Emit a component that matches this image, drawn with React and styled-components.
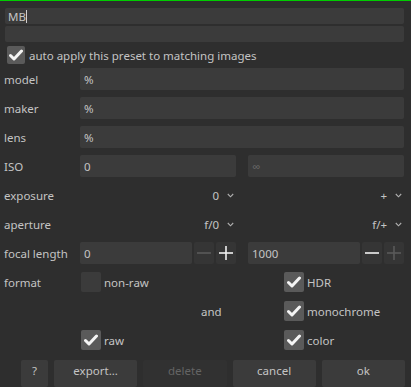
import React from "react";
import styled, { createGlobalStyle } from "styled-components";

const Global = createGlobalStyle`
  html, body { margin: 0; padding: 0; background: #2e2e2e; }
  body { font-family: "Noto Sans", "Open Sans", sans-serif; font-size: 11.5px; color: #c4c4c4; }
  * { box-sizing: border-box; }
`;

const Dialog = styled.div`
  width: 411px;
  height: 387px;
  overflow: hidden;
  border-top: 1px solid #00cc00;
  background: #2e2e2e;
  display: flex;
  flex-direction: column;
`;

const TextField = styled.div`
  height: ${(p) => p.$h || 22}px;
  background: #3b3b3b;
  border-radius: 2px;
  padding: 0 4px;
  display: flex;
  align-items: center;
  color: ${(p) => (p.$dim ? "#6a6a6a" : "#c4c4c4")};
  min-width: 0;
`;

const NameField = styled(TextField)`
  margin: ${(p) => p.$mt}px 7px 0 5px;
  padding-left: 3px;
`;

const Caret = styled.span`
  display: inline-block;
  width: 1px;
  height: 13px;
  background: #d0d0d0;
`;

const AutoRow = styled.label`
  margin: 4px 0 0 7px;
  height: 18px;
  display: flex;
  align-items: center;
  gap: 4px;
  font-size: 11.5px;
`;

const Box = styled.span`
  width: ${(p) => p.$size || 20}px;
  height: ${(p) => p.$size || 20}px;
  border-radius: 2px;
  background: ${(p) => (p.$on ? "#5a5a5a" : "#3b3b3b")};
  display: flex;
  align-items: center;
  justify-content: center;
  flex: none;
`;

const Rows = styled.div`
  margin-top: 4px;
  padding: 0 7px 0 4px;
  display: flex;
  flex-direction: column;
  gap: 7px;
`;

const Row = styled.div`
  height: 22px;
  display: grid;
  grid-template-columns: 76px 1fr;
  align-items: center;
`;

const Label = styled.span`
  white-space: nowrap;
`;

const Pair = styled.div`
  display: grid;
  grid-template-columns: 1fr 1fr;
  column-gap: 12px;
  height: 100%;
  align-items: center;
`;

const Combo = styled.div`
  display: flex;
  justify-content: flex-end;
  align-items: center;
  gap: 8px;
  padding-right: 2px;
`;

const Stepper = styled.div`
  display: grid;
  grid-template-columns: 1fr 20px 20px;
  column-gap: 2px;
  height: 100%;
`;

const StepBtn = styled.div`
  background: #353535;
  border-radius: 2px;
  display: flex;
  align-items: center;
  justify-content: center;
`;

const Check = styled.label`
  display: flex;
  align-items: center;
  gap: 3px;
`;

const FormatRow = styled(Row)`
  grid-template-columns: 77px 120px 83px 1fr;
`;

const Buttons = styled.div`
  margin-top: 9px;
  padding: 0 6px 0 21px;
  display: flex;
  gap: 6px;
  height: 28px;
`;

const Button = styled.div`
  flex: ${(p) => (p.$w ? "none" : "1")};
  width: ${(p) => (p.$w ? p.$w + "px" : "auto")};
  background: ${(p) => (p.$disabled ? "#313131" : "#3b3b3b")};
  color: ${(p) => (p.$disabled ? "#646464" : "#c4c4c4")};
  border-radius: 2px;
  display: flex;
  justify-content: center;
  padding-top: 3px;
  font-size: 11.5px;
`;

const Tick = () => (
  <svg width="14" height="12" viewBox="0 0 14 12">
    <polyline points="1.5,6.5 5,10 12.5,2" fill="none" stroke="#f4f4f4" strokeWidth="3" strokeLinecap="round" strokeLinejoin="round" />
  </svg>
);

const Chevron = () => (
  <svg width="7" height="5" viewBox="0 0 7 5">
    <polyline points="0.8,1 3.5,3.8 6.2,1" fill="none" stroke="#b0b0b0" strokeWidth="1.1" />
  </svg>
);

const Minus = ({ on }) => (
  <svg width="14" height="14" viewBox="0 0 14 14">
    <line x1="0" y1="7" x2="14" y2="7" stroke={on ? "#f0f0f0" : "#5a5a5a"} strokeWidth="1.6" />
  </svg>
);

const Plus = ({ on }) => (
  <svg width="14" height="14" viewBox="0 0 14 14">
    <line x1="0" y1="7" x2="14" y2="7" stroke={on ? "#f0f0f0" : "#5a5a5a"} strokeWidth="1.6" />
    <line x1="7" y1="0" x2="7" y2="14" stroke={on ? "#f0f0f0" : "#5a5a5a"} strokeWidth="1.6" />
  </svg>
);

const CheckItem = ({ on, text, size }) => (
  <Check>
    <Box $on={on} $size={size}>{on && <Tick />}</Box>
    {text}
  </Check>
);

export default function App() {
  return (
    <>
      <Global />
      <Dialog>
        <NameField $h={17} $mt={7}>
          MB<Caret />
        </NameField>
        <NameField $h={17} $mt={2} />
        <AutoRow>
          <Box $on $size={18}><Tick /></Box>
          auto apply this preset to matching images
        </AutoRow>
        <Rows>
          <Row>
            <Label>model</Label>
            <TextField>%</TextField>
          </Row>
          <Row>
            <Label>maker</Label>
            <TextField>%</TextField>
          </Row>
          <Row>
            <Label>lens</Label>
            <TextField>%</TextField>
          </Row>
          <Row>
            <Label>ISO</Label>
            <Pair>
              <TextField>0</TextField>
              <TextField $dim>∞</TextField>
            </Pair>
          </Row>
          <Row>
            <Label>exposure</Label>
            <Pair>
              <Combo>0 <Chevron /></Combo>
              <Combo>+ <Chevron /></Combo>
            </Pair>
          </Row>
          <Row>
            <Label>aperture</Label>
            <Pair>
              <Combo>f/0 <Chevron /></Combo>
              <Combo>f/+ <Chevron /></Combo>
            </Pair>
          </Row>
          <Row>
            <Label>focal length</Label>
            <Pair>
              <Stepper>
                <TextField>0</TextField>
                <StepBtn><Minus /></StepBtn>
                <StepBtn><Plus on /></StepBtn>
              </Stepper>
              <Stepper>
                <TextField>1000</TextField>
                <StepBtn><Minus on /></StepBtn>
                <StepBtn><Plus /></StepBtn>
              </Stepper>
            </Pair>
          </Row>
          <FormatRow>
            <Label>format</Label>
            <CheckItem text="non-raw" />
            <span />
            <CheckItem on text="HDR" />
          </FormatRow>
          <FormatRow>
            <span />
            <span />
            <Label>and</Label>
            <CheckItem on text="monochrome" />
          </FormatRow>
          <FormatRow>
            <span />
            <CheckItem on text="raw" />
            <span />
            <CheckItem on text="color" />
          </FormatRow>
        </Rows>
        <Buttons>
          <Button $w={27}>?</Button>
          <Button>export...</Button>
          <Button $disabled>delete</Button>
          <Button>cancel</Button>
          <Button>ok</Button>
        </Buttons>
      </Dialog>
    </>
  );
}
